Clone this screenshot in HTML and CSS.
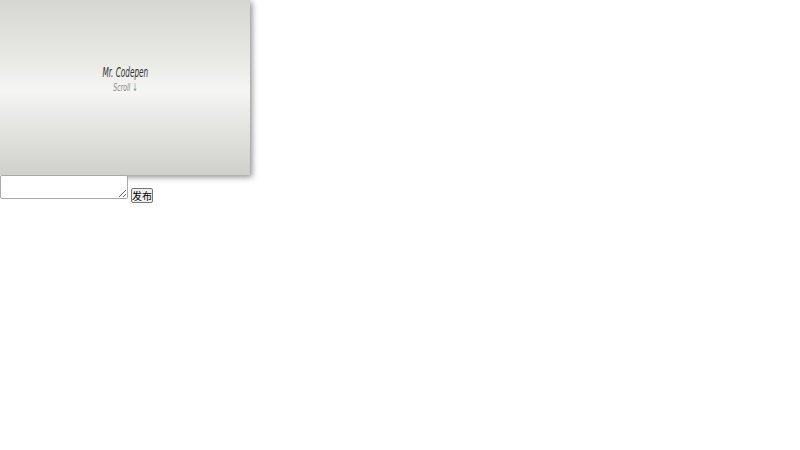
FILE: index.html
```html
<!DOCTYPE html>
<html lang="zh">
<head>
    <meta charset="UTF-8">
    <meta name="viewport" content="width=device-width, initial-scale=1.0">
    <title>Mr. Codepen</title>
    <link rel="stylesheet" href="styles.css">
</head>
<body>
    <div class="hero">
        <div class="hero-title">Mr. Codepen</div>
        <div class="hero-scroll">Scroll ↓</div>
    </div>

    <div class="post-row">
        <textarea class="post-input"></textarea>
        <button class="post-btn">发布</button>
    </div>
</body>
</html>
```

FILE: styles.css
```css
body {
    margin: 0;
    padding: 0;
    background: #fff;
    font-family: "DejaVu Sans Condensed", "DejaVu Sans", sans-serif;
}

.hero {
    width: 250px;
    height: 175px;
    display: flex;
    flex-direction: column;
    align-items: center;
    justify-content: center;
    gap: 1px;
    padding-bottom: 18px;
    box-sizing: border-box;
    background: linear-gradient(to bottom, #d6d6d2 0%, #e6e6e3 30%, #f5f5f3 52%, #e2e2df 75%, #cfcfcb 100%);
    box-shadow: 2px 2px 6px rgba(0, 0, 0, 0.45);
}

.hero-title {
    font-size: 14px;
    font-style: oblique;
    color: #333;
    line-height: 16px;
    transform: scaleX(0.58);
    white-space: nowrap;
}

.hero-scroll {
    font-size: 11px;
    font-style: oblique;
    color: #888;
    line-height: 13px;
    transform: scaleX(0.62);
    white-space: nowrap;
}

.post-row {
    display: flex;
    align-items: flex-start;
}

.post-input {
    width: 128px;
    height: 24px;
    margin: 0;
    padding: 2px;
    box-sizing: border-box;
    border: 1px solid #a9a9a9;
    border-radius: 2px;
    resize: both;
}

.post-btn {
    margin: 13px 0 0 3px;
    height: 15px;
    padding: 0;
    font-size: 10px;
    line-height: 12px;
    font-family: "Noto Sans CJK SC", sans-serif;
    color: #000;
    background: #efefef;
    border: 1px solid #767676;
    border-radius: 2px;
}
```
